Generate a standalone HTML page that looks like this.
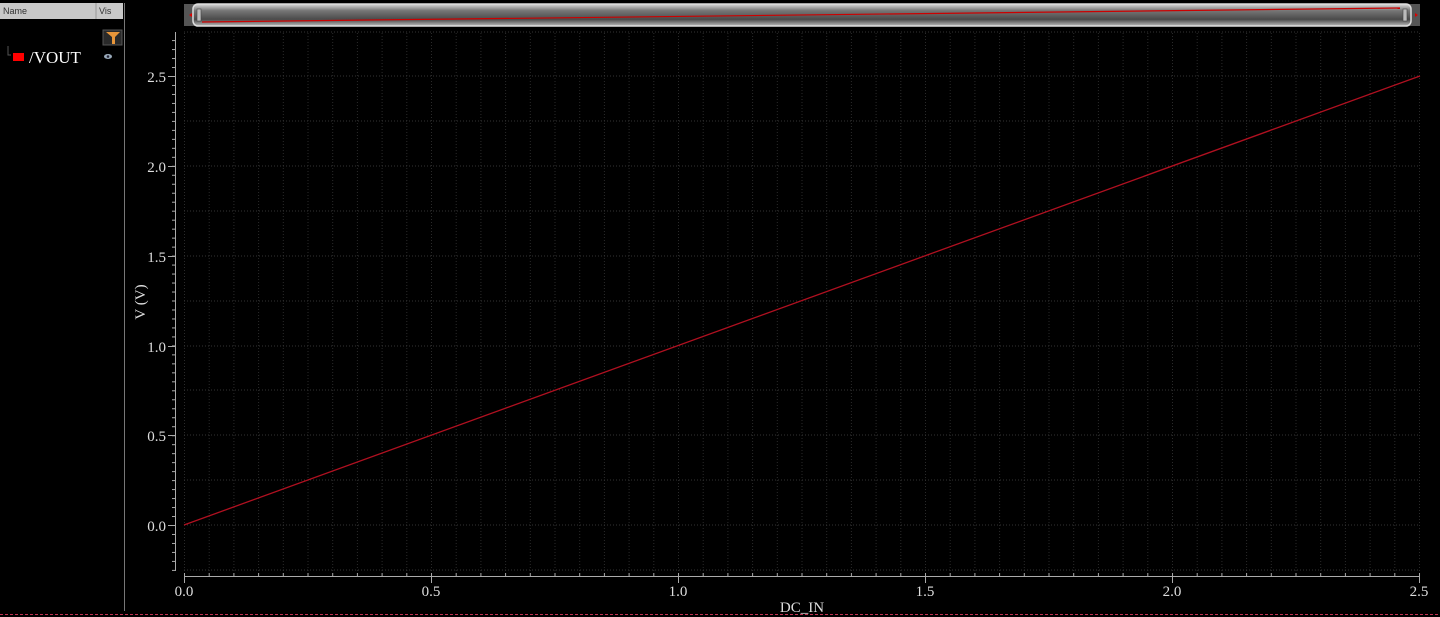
<!DOCTYPE html>
<html><head><meta charset="utf-8"><style>
html,body{margin:0;padding:0;background:#000;width:1440px;height:617px;overflow:hidden;font-family:"Liberation Serif",serif}
</style></head><body>
<svg width="1440" height="617" viewBox="0 0 1440 617" xmlns="http://www.w3.org/2000/svg" style="position:absolute;left:0;top:0">
<defs>
<pattern id="vg" x="184" y="0" width="24.7" height="617" patternUnits="userSpaceOnUse">
<line x1="0.5" y1="0" x2="0.5" y2="617" stroke="#2a2a2a" stroke-width="1" stroke-dasharray="1 2"/>
</pattern>
<pattern id="vt" x="184" y="0" width="24.7" height="617" patternUnits="userSpaceOnUse">
<line x1="0.5" y1="0" x2="0.5" y2="617" stroke="#aaa" stroke-width="1"/>
</pattern>
<pattern id="ht" x="0" y="525" width="20" height="8.98" patternUnits="userSpaceOnUse">
<line x1="0" y1="0.5" x2="20" y2="0.5" stroke="#aaa" stroke-width="1"/>
</pattern>
<linearGradient id="sb" x1="0" y1="0" x2="0" y2="1">
<stop offset="0" stop-color="#ddd"/><stop offset="0.3" stop-color="#777"/><stop offset="0.7" stop-color="#4a4a4a"/><stop offset="1" stop-color="#bbb"/>
</linearGradient>
</defs>
<rect x="0" y="3" width="123" height="16" fill="#c8c8c8"/>
<line x1="96" y1="3" x2="96" y2="19" stroke="#999"/>
<text x="3" y="14" font-family="Liberation Sans" font-size="9" fill="#333">Name</text>
<text x="99" y="14" font-family="Liberation Sans" font-size="9" fill="#333">Vis</text>
<line x1="124.5" y1="3" x2="124.5" y2="611" stroke="#777"/>
<rect x="103" y="30" width="19" height="15" fill="#2a2a2a" stroke="#555"/>
<path d="M106 32 L120 32 L115 37 L115 44 L112 44 L112 37 Z" fill="#e8963a"/>
<path d="M8 46 L8 55 L11 55" stroke="#555" fill="none"/>
<rect x="13" y="53" width="11" height="8" fill="#f00"/>
<text x="29" y="63" font-size="17" fill="#fff">/VOUT</text>
<ellipse cx="108" cy="56.5" rx="4" ry="2.5" fill="#9ab"/><circle cx="108" cy="56.5" r="1.3" fill="#223"/>
<rect x="184" y="4" width="1236" height="22" fill="#555"/>
<rect x="193" y="4" width="1218" height="22" rx="5" fill="url(#sb)" stroke="#ddd" stroke-width="1.5"/>
<line x1="202" y1="22" x2="1400" y2="8" stroke="#c00" stroke-width="1.2"/>
<rect x="197" y="9" width="4" height="12" fill="#bbb" stroke="#444" stroke-width="0.6"/>
<rect x="1403" y="9" width="4" height="12" fill="#bbb" stroke="#444" stroke-width="0.6"/>
<path d="M189 15 L192 13 L192 17Z" fill="#d00"/><path d="M1418 15 L1415 13 L1415 17Z" fill="#d00"/>
<rect x="184" y="32" width="1236" height="539" fill="url(#vg)"/>
<g stroke="#333" stroke-dasharray="1 2">
<line x1="184" y1="570" x2="1420" y2="570"/>
<line x1="184" y1="525" x2="1420" y2="525"/>
<line x1="184" y1="480" x2="1420" y2="480"/>
<line x1="184" y1="435" x2="1420" y2="435"/>
<line x1="184" y1="390" x2="1420" y2="390"/>
<line x1="184" y1="346" x2="1420" y2="346"/>
<line x1="184" y1="301" x2="1420" y2="301"/>
<line x1="184" y1="256" x2="1420" y2="256"/>
<line x1="184" y1="211" x2="1420" y2="211"/>
<line x1="184" y1="166" x2="1420" y2="166"/>
<line x1="184" y1="121" x2="1420" y2="121"/>
<line x1="184" y1="76" x2="1420" y2="76"/>
<line x1="184" y1="32" x2="1420" y2="32"/>
</g>
<line x1="175.5" y1="32" x2="175.5" y2="571" stroke="#aaa"/>
<rect x="172" y="33" width="3" height="538" fill="url(#ht)"/>
<g stroke="#aaa"><line x1="168" y1="525.5" x2="175" y2="525.5"/><line x1="168" y1="435.5" x2="175" y2="435.5"/><line x1="168" y1="346.5" x2="175" y2="346.5"/><line x1="168" y1="256.5" x2="175" y2="256.5"/><line x1="168" y1="166.5" x2="175" y2="166.5"/><line x1="168" y1="76.5" x2="175" y2="76.5"/></g>
<line x1="184" y1="576.5" x2="1420" y2="576.5" stroke="#aaa"/>
<rect x="184" y="573" width="1237" height="3" fill="url(#vt)"/>
<g stroke="#aaa"><line x1="184.5" y1="576" x2="184.5" y2="583"/><line x1="431.5" y1="576" x2="431.5" y2="583"/><line x1="678.5" y1="576" x2="678.5" y2="583"/><line x1="925.5" y1="576" x2="925.5" y2="583"/><line x1="1172.5" y1="576" x2="1172.5" y2="583"/><line x1="1419.5" y1="576" x2="1419.5" y2="583"/></g>
<g font-size="15" fill="#ddd" text-anchor="end">
<text x="166" y="531">0.0</text><text x="166" y="441">0.5</text><text x="166" y="352">1.0</text><text x="166" y="262">1.5</text><text x="166" y="172">2.0</text><text x="166" y="82">2.5</text>
</g>
<g font-size="15" fill="#ddd" text-anchor="middle">
<text x="184" y="596">0.0</text><text x="431" y="596">0.5</text><text x="678" y="596">1.0</text><text x="925" y="596">1.5</text><text x="1172" y="596">2.0</text><text x="1419" y="596">2.5</text>
</g>
<text transform="translate(145,302) rotate(-90)" font-size="15" fill="#ddd" text-anchor="middle">V (V)</text>
<text x="802" y="612" font-size="15" fill="#ddd" text-anchor="middle">DC_IN</text>
<line x1="184" y1="525" x2="1420" y2="76" stroke="#b01020" stroke-width="1.3"/>
<line x1="0" y1="614.5" x2="1440" y2="614.5" stroke="#c03050" stroke-dasharray="3 2"/>
</svg>
</body></html>
